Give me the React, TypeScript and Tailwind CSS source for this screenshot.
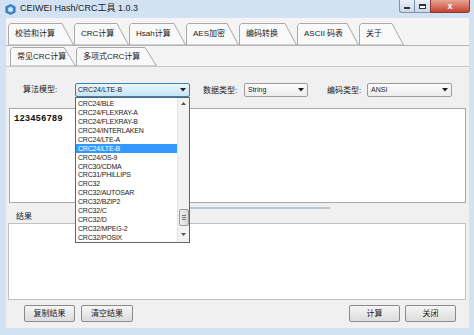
import React from "react";

const font = "font-['Liberation_Sans','Noto_Sans_CJK_SC',sans-serif]";

const algos = [
  "CRC24/BLE",
  "CRC24/FLEXRAY-A",
  "CRC24/FLEXRAY-B",
  "CRC24/INTERLAKEN",
  "CRC24/LTE-A",
  "CRC24/LTE-B",
  "CRC24/OS-9",
  "CRC30/CDMA",
  "CRC31/PHILLIPS",
  "CRC32",
  "CRC32/AUTOSAR",
  "CRC32/BZIP2",
  "CRC32/C",
  "CRC32/D",
  "CRC32/MPEG-2",
  "CRC32/POSIX",
];

// trapezoid tab, slanted right edge
function Tab({ label, w, h, className }: { label: string; w: number; h: number; className: string }) {
  return (
    <div className={`relative shrink-0 ${className}`}>
      <svg className="absolute inset-0" width={w} height={h}>
        <polygon
          points={`0.5,${h} 0.5,2.5 2.5,0.5 ${w - 12},0.5 ${w - 0.5},${h}`}
          fill="#f9f9f9"
          stroke="#a9a9a9"
        />
      </svg>
      <span className="relative flex h-full items-center pl-[7px] text-[8px] text-[#1a1a1a]">{label}</span>
    </div>
  );
}

function Arrow() {
  return (
    <svg width="6" height="4" className="shrink-0">
      <polygon points="0,0 6,0 3,3.5" fill="#222" />
    </svg>
  );
}

function Btn({ label, className }: { label: string; className: string }) {
  return (
    <div
      className={`flex h-[17px] items-center justify-center rounded-[2px] border border-[#8a8a8a] bg-gradient-to-b from-[#f6f6f6] to-[#dcdcdc] text-[8px] text-[#222] ${className}`}
    >
      {label}
    </div>
  );
}

export default function App() {
  return (
    <div className={`relative h-[335px] w-[474px] overflow-hidden bg-[#d3e2f3] ${font}`}>
      {/* title bar */}
      <div className="flex h-[18px] items-center">
        <svg width="11" height="11" viewBox="0 0 12 12" className="ml-[5px]">
          <polygon points="6,0.5 11,3 11,9 6,11.5 1,9 1,3" fill="#3f8fd6" stroke="#1f5f9f" strokeWidth="0.8" />
          <polygon points="6,3 8.5,4.5 8.5,7.5 6,9 3.5,7.5 3.5,4.5" fill="#cfe8fb" />
        </svg>
        <span className="ml-[4px] text-[9px] text-[#1b1b1b]">CEIWEI Hash/CRC工具 1.0.3</span>
        <div className="ml-auto mr-[4px] flex self-start">
          <div className="flex h-[13px] w-[16px] items-center justify-center rounded-bl-[3px] border border-t-0 border-[#7f93b1] bg-gradient-to-b from-[#e9f0f8] to-[#c9d8ea]">
            <div className="mt-[3px] h-[2px] w-[6px] border border-[#333] bg-white" />
          </div>
          <div className="flex h-[13px] w-[15px] items-center justify-center border-b border-[#7f93b1] bg-gradient-to-b from-[#e9f0f8] to-[#c9d8ea]">
            <div className="h-[5px] w-[7px] border border-[#333] border-t-2 bg-white" />
          </div>
          <div className="flex h-[13px] w-[40px] items-center justify-center rounded-br-[3px] border border-t-0 border-[#8a3a32] bg-gradient-to-b from-[#e6a593] to-[#c4402f] text-[9px] font-bold leading-none text-white">
            x
          </div>
        </div>
      </div>

      {/* client area */}
      <div className="ml-[6px] flex h-[310px] w-[463px] flex-col bg-[#f0f0f0]">
        {/* main tab row */}
        <div className="flex h-[27px] items-end bg-[#f4f4f4] pl-[2px]">
          <Tab label="校验和计算" w={66} h={22} className="h-[22px] w-[66px]" />
          <Tab label="CRC计算" w={55} h={22} className="h-[22px] w-[55px]" />
          <Tab label="Hsah计算" w={57} h={22} className="h-[22px] w-[57px]" />
          <Tab label="AES加密" w={53} h={22} className="h-[22px] w-[53px]" />
          <Tab label="编码转换" w={58} h={22} className="h-[22px] w-[58px]" />
          <Tab label="ASCII 码表" w={62} h={22} className="h-[22px] w-[62px]" />
          <Tab label="关于" w={45} h={22} className="h-[22px] w-[45px]" />
        </div>

        {/* sub tab row */}
        <div className="flex h-[21px] items-end border-t border-[#b4b4b4] bg-[#f4f4f4] pl-[4px]">
          <Tab label="常见CRC计算" w={66} h={19} className="h-[19px] w-[66px]" />
          <Tab label="多项式CRC计算" w={81} h={19} className="h-[19px] w-[81px]" />
        </div>

        {/* options row */}
        <div className="flex h-[42px] items-start border-t border-[#c8c8c8] pt-[16px]">
          <div className="ml-[17px] flex h-[14px] w-[52px] items-center text-[8px] text-[#222]">算法模型:</div>
          <div className="flex h-[14px] w-[115px] items-center justify-between rounded-[2px] border border-[#3c7fb1] bg-gradient-to-b from-[#eaf6fd] to-[#c4e5f8] pl-[2px] pr-[3px] text-[7px] text-[#222]">
            <span>CRC24/LTE-B</span>
            <Arrow />
          </div>
          <div className="ml-[13px] flex h-[14px] w-[41px] items-center pt-[2px] text-[8px] text-[#222]">数据类型:</div>
          <div className="flex h-[14px] w-[64px] items-center justify-between rounded-[2px] border border-[#9a9a9a] bg-gradient-to-b from-[#fdfdfd] to-[#ececec] pl-[3px] pr-[3px] text-[7px] text-[#222]">
            <span>String</span>
            <Arrow />
          </div>
          <div className="ml-[19px] flex h-[14px] w-[40px] items-center pt-[2px] text-[8px] text-[#222]">编码类型:</div>
          <div className="flex h-[14px] w-[85px] items-center justify-between rounded-[2px] border border-[#9a9a9a] bg-gradient-to-b from-[#fdfdfd] to-[#ececec] pl-[3px] pr-[3px] text-[7px] text-[#222]">
            <span>ANSI</span>
            <Arrow />
          </div>
        </div>

        {/* input memo */}
        <div className="ml-[3px] h-[95px] w-[457px] border border-[#a8a8a8] bg-white pl-[4px] pt-[4px] font-['Liberation_Mono',monospace] text-[9px] font-bold text-[#111]">
          123456789
        </div>

        {/* splitter band + label */}
        <div className="relative flex h-[20px] flex-col">
          <div className="ml-[184px] mt-[4px] h-[3px] w-[140px] border border-[#b8c6d6] bg-[repeating-linear-gradient(90deg,#8aa0b8_0px,#8aa0b8_1px,#ffffff_1px,#ffffff_2px)]" />
          <div className="ml-[10px] mt-[2px] text-[8px] text-[#222]">结果</div>
        </div>

        {/* results memo */}
        <div className="ml-[2px] h-[77px] w-[458px] border border-[#c0c0c0] bg-white" />

        {/* buttons */}
        <div className="flex h-[27px] items-center">
          <Btn label="复制结果" className="ml-[18px] w-[51px]" />
          <Btn label="清空结果" className="ml-[6px] w-[52px]" />
          <Btn label="计算" className="ml-auto w-[51px]" />
          <Btn label="关闭" className="ml-[5px] mr-[13px] w-[51px]" />
        </div>
      </div>

      {/* open dropdown list */}
      <div className="absolute left-[75px] top-[97px] flex h-[146px] w-[115px] border border-[#646464] bg-white">
        <div className="flex flex-1 flex-col pt-[1px]">
          {algos.map((a) => (
            <div
              key={a}
              className={`flex h-[9px] items-center pl-[2px] text-[7px] leading-none tracking-[-0.2px] ${
                a === "CRC24/LTE-B" ? "bg-[#3399ff] text-white" : "text-[#222]"
              }`}
            >
              {a}
            </div>
          ))}
        </div>
        <div className="flex w-[12px] flex-col items-center border-l border-[#e4e4e4] bg-[#f2f2f2]">
          <svg width="5" height="3" className="mt-[4px]">
            <polygon points="0,3 5,3 2.5,0" fill="#555" />
          </svg>
          <div className="mt-[104px] flex h-[17px] w-[10px] flex-col items-center justify-center gap-[1px] rounded-[2px] border border-[#9a9a9a] bg-gradient-to-r from-[#f0f0f0] to-[#d8d8d8]">
            <div className="h-px w-[4px] bg-[#777]" />
            <div className="h-px w-[4px] bg-[#777]" />
            <div className="h-px w-[4px] bg-[#777]" />
          </div>
          <svg width="5" height="3" className="mt-[7px]">
            <polygon points="0,0 5,0 2.5,3" fill="#555" />
          </svg>
        </div>
      </div>
    </div>
  );
}
